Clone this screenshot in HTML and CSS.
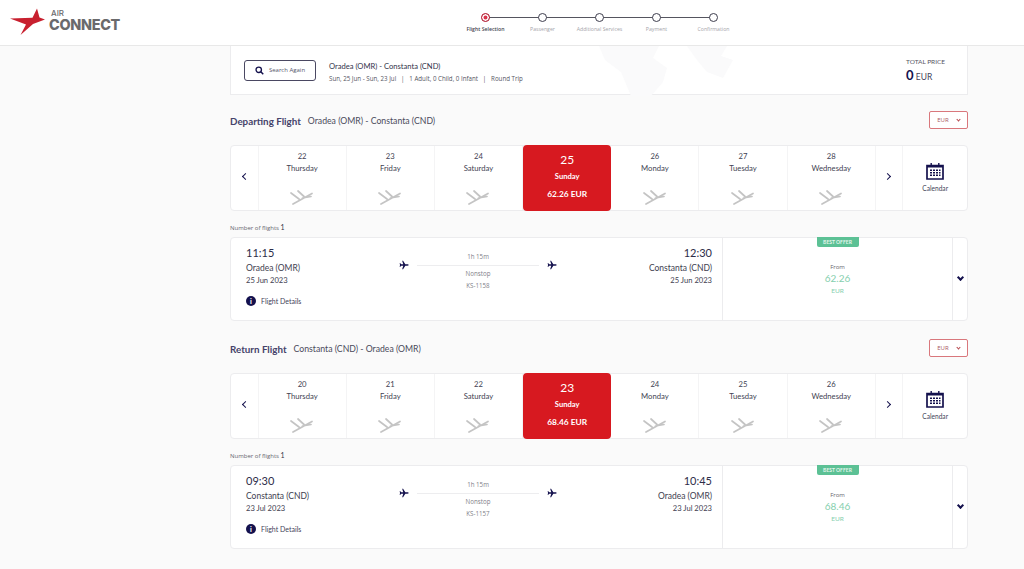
FILE: index.html
```html
<!DOCTYPE html>
<html lang="en">
<head>
    <meta charset="UTF-8">
    <meta name="viewport" content="width=device-width, initial-scale=1.0">
    <title>Air Connect - Flight Selection</title>
    <link rel="stylesheet" href="styles.css">
</head>
<body>
    <svg class="icon-defs" width="0" height="0">
        <symbol id="planeSide" viewBox="0 0 12 12">
            <path d="M11.6 6c0-.5-.6-.8-1.3-.8H7.6L4.9.9H3.8l1.3 4.3H2.7L1.6 3.8H.7l.6 2.2-.6 2.2h.9l1.1-1.4h2.4L3.8 11.1h1.1l2.7-4.3h2.7c.7 0 1.3-.3 1.3-.8z"/>
        </symbol>
        <symbol id="planeOff" viewBox="0 0 24 15">
            <path d="M3 14 L22 3.500 M1 3 L9 9 M8 1 L14 6.500 M12.500 8 L21 6.500" fill="none" stroke="currentColor" stroke-width="1.700" stroke-linecap="round"/>
        </symbol>
        <symbol id="calendarIcon" viewBox="0 0 18 18">
            <path d="M1 3.500h16v13.500H1z" fill="none" stroke="currentColor" stroke-width="1.700"/>
            <path d="M1 3h16v2.500H1zM4.500 1h1.400v3H4.500zM12.100 1h1.400v3h-1.400z" fill="currentColor"/>
            <path d="M4 7.500h2v1.500H4zM7 7.500h2v1.500H7zM10 7.500h2v1.500h-2zM13 7.500h1.500v1.500H13zM4 10h2v1.500H4zM7 10h2v1.500H7zM10 10h2v1.500h-2zM13 10h1.500v1.500H13zM4 12.500h2V14H4zM7 12.500h2V14H7zM10 12.500h2V14h-2zM13 12.500h1.500V14H13z" fill="currentColor"/>
        </symbol>
    </svg>

    <header class="topbar">
        <div class="logo">
            <svg class="logo-mark" viewBox="0 0 36 28" width="36" height="28">
                <path d="M0 10.500 L22.500 9.800 L27 0.500 L29.500 9.500 L35 11.500 L23 16 L10.500 27 L16 16.500 Z" fill="#c8202f"/>
            </svg>
            <div class="logo-text">
                <span class="logo-air">AIR</span>
                <span class="logo-connect">CONNECT</span>
            </div>
        </div>
        <ol class="steps">
            <li class="step active"><span class="dot"></span><span class="step-label">Flight Selection</span></li>
            <li class="step"><span class="dot"></span><span class="step-label">Passenger</span></li>
            <li class="step"><span class="dot"></span><span class="step-label">Additional Services</span></li>
            <li class="step"><span class="dot"></span><span class="step-label">Payment</span></li>
            <li class="step"><span class="dot"></span><span class="step-label">Confirmation</span></li>
        </ol>
    </header>

    <main class="content">
        <section class="summary">
            <svg class="summary-map" viewBox="0 0 200 50" width="200" height="50">
                <path d="M8 0h60l-6 12 14 10-4 14-12 14H40L30 26 14 14zM96 0h40l-6 10 12 4-10 18-16-6-10-12z" fill="#fafafb"/>
            </svg>
            <button class="search-again">
                <svg class="search-icon" viewBox="0 0 12 12" width="9" height="9">
                    <circle cx="5" cy="5" r="3.600" fill="none" stroke="currentColor" stroke-width="1.800"/>
                    <path d="M7.700 7.700 11 11" stroke="currentColor" stroke-width="2"/>
                </svg>
                Search Again
            </button>
            <div class="summary-info">
                <div class="summary-route">Oradea (OMR) - Constanta (CND)</div>
                <div class="summary-meta">Sun, 25 Jun - Sun, 23 Jul &nbsp; | &nbsp; 1 Adult, 0 Child, 0 Infant &nbsp; | &nbsp; Round Trip</div>
            </div>
            <div class="total">
                <div class="total-label">TOTAL PRICE</div>
                <div class="total-value"><b>0</b> EUR</div>
            </div>
        </section>

        <div class="section-head">
            <h2>Departing Flight</h2>
            <span class="section-route">Oradea (OMR) - Constanta (CND)</span>
            <button class="currency">EUR <span class="caret"></span></button>
        </div>
        <div class="dates">
            <button class="arrow"><span class="chev chev-left"></span></button>
            <div class="day"><span>22</span><span>Thursday</span><svg class="no-flight"><use href="#planeOff"/></svg></div>
            <div class="day"><span>23</span><span>Friday</span><svg class="no-flight"><use href="#planeOff"/></svg></div>
            <div class="day"><span>24</span><span>Saturday</span><svg class="no-flight"><use href="#planeOff"/></svg></div>
            <div class="day selected"><span class="day-num">25</span><span class="day-name">Sunday</span><span class="day-price">62.26 EUR</span></div>
            <div class="day"><span>26</span><span>Monday</span><svg class="no-flight"><use href="#planeOff"/></svg></div>
            <div class="day"><span>27</span><span>Tuesday</span><svg class="no-flight"><use href="#planeOff"/></svg></div>
            <div class="day"><span>28</span><span>Wednesday</span><svg class="no-flight"><use href="#planeOff"/></svg></div>
            <button class="arrow arrow-next"><span class="chev chev-right"></span></button>
            <div class="calendar"><svg class="calendar-icon"><use href="#calendarIcon"/></svg><span>Calendar</span></div>
        </div>
        <div class="flight-count">Number of flights <b>1</b></div>
        <article class="flight">
            <div class="flight-main">
                <div class="leg">
                    <div class="time">11:15</div>
                    <div class="city">Oradea (OMR)</div>
                    <div class="date">25 Jun 2023</div>
                    <div class="details"><span class="info">i</span>Flight Details</div>
                </div>
                <div class="route">
                    <div class="route-line">
                        <svg class="plane"><use href="#planeSide"/></svg>
                        <div class="track"><span class="duration">1h 15m</span></div>
                        <svg class="plane"><use href="#planeSide"/></svg>
                    </div>
                    <div class="route-note">Nonstop</div>
                    <div class="route-note">KS-1158</div>
                </div>
                <div class="leg leg-end">
                    <div class="time">12:30</div>
                    <div class="city">Constanta (CND)</div>
                    <div class="date">25 Jun 2023</div>
                </div>
            </div>
            <div class="price">
                <span class="badge">BEST OFFER</span>
                <span class="from">From</span>
                <span class="amount">62.26</span>
                <span class="price-cur">EUR</span>
            </div>
            <div class="expand"><span class="chev chev-down"></span></div>
        </article>

        <div class="section-head section-return">
            <h2>Return Flight</h2>
            <span class="section-route">Constanta (CND) - Oradea (OMR)</span>
            <button class="currency">EUR <span class="caret"></span></button>
        </div>
        <div class="dates">
            <button class="arrow"><span class="chev chev-left"></span></button>
            <div class="day"><span>20</span><span>Thursday</span><svg class="no-flight"><use href="#planeOff"/></svg></div>
            <div class="day"><span>21</span><span>Friday</span><svg class="no-flight"><use href="#planeOff"/></svg></div>
            <div class="day"><span>22</span><span>Saturday</span><svg class="no-flight"><use href="#planeOff"/></svg></div>
            <div class="day selected"><span class="day-num">23</span><span class="day-name">Sunday</span><span class="day-price">68.46 EUR</span></div>
            <div class="day"><span>24</span><span>Monday</span><svg class="no-flight"><use href="#planeOff"/></svg></div>
            <div class="day"><span>25</span><span>Tuesday</span><svg class="no-flight"><use href="#planeOff"/></svg></div>
            <div class="day"><span>26</span><span>Wednesday</span><svg class="no-flight"><use href="#planeOff"/></svg></div>
            <button class="arrow arrow-next"><span class="chev chev-right"></span></button>
            <div class="calendar"><svg class="calendar-icon"><use href="#calendarIcon"/></svg><span>Calendar</span></div>
        </div>
        <div class="flight-count">Number of flights <b>1</b></div>
        <article class="flight">
            <div class="flight-main">
                <div class="leg">
                    <div class="time">09:30</div>
                    <div class="city">Constanta (CND)</div>
                    <div class="date">23 Jul 2023</div>
                    <div class="details"><span class="info">i</span>Flight Details</div>
                </div>
                <div class="route">
                    <div class="route-line">
                        <svg class="plane"><use href="#planeSide"/></svg>
                        <div class="track"><span class="duration">1h 15m</span></div>
                        <svg class="plane"><use href="#planeSide"/></svg>
                    </div>
                    <div class="route-note">Nonstop</div>
                    <div class="route-note">KS-1157</div>
                </div>
                <div class="leg leg-end">
                    <div class="time">10:45</div>
                    <div class="city">Oradea (OMR)</div>
                    <div class="date">23 Jul 2023</div>
                </div>
            </div>
            <div class="price">
                <span class="badge">BEST OFFER</span>
                <span class="from">From</span>
                <span class="amount">68.46</span>
                <span class="price-cur">EUR</span>
            </div>
            <div class="expand"><span class="chev chev-down"></span></div>
        </article>
    </main>
</body>
</html>
```

FILE: styles.css
```css
:root {
    --navy: #14114d;
    --ink: #33324f;
    --text: #4a4a5a;
    --muted: #8a8a94;
    --red: #d71920;
    --green: #5cc195;
    --line: #ececee;
}

* {
    box-sizing: border-box;
}

body {
    margin: 0;
    font-family: "Lato", "Liberation Sans", sans-serif;
    background-color: #fafafa;
    color: var(--text);
    height: 569px;
    overflow: hidden;
}

.icon-defs {
    position: absolute;
}

button {
    font-family: inherit;
    background: none;
    border: none;
    padding: 0;
}

/* header */
.topbar {
    height: 46px;
    background-color: #fff;
    border-bottom: 1px solid #e8e8e8;
    display: flex;
    align-items: flex-start;
    padding: 8px 0 0 10px;
}

.logo {
    display: flex;
    align-items: flex-start;
    width: 447px;
}

.logo-mark {
    flex: none;
}

.logo-text {
    display: flex;
    flex-direction: column;
    margin: 0 0 0 3px;
    color: #6a6a6c;
    font-family: "Inter", "Liberation Sans", sans-serif;
}

.logo-air {
    font-size: 8px;
    line-height: 9px;
    margin: 1px 0 0 2px;
    font-weight: 500;
}

.logo-connect {
    font-size: 14.400px;
    line-height: 14px;
    font-weight: 800;
    letter-spacing: -0.3px;
}

.steps {
    list-style: none;
    display: flex;
    margin: 0;
    padding: 5px 0 0;
}

.step {
    width: 57px;
    display: flex;
    flex-direction: column;
    align-items: center;
    position: relative;
}

.step:not(:last-child)::after {
    content: '';
    position: absolute;
    top: 4px;
    left: 28px;
    width: 57px;
    height: 1px;
    background-color: #55555f;
}

.dot {
    width: 9px;
    height: 9px;
    border-radius: 50%;
    border: 1px solid #3e3e4e;
    background-color: #fff;
    position: relative;
    z-index: 1;
}

.active .dot {
    border-color: #b0283c;
    background-color: #d9334a;
    box-shadow: inset 0 0 0 1.500px #fff;
}

.step-label {
    font-family: "Open Sans", sans-serif;
    font-size: 5.200px;
    line-height: 8px;
    margin-top: 3px;
    color: #a4a4aa;
    white-space: nowrap;
}

.active .step-label {
    color: #44444f;
    font-weight: 600;
}

/* page content */
.content {
    width: 738px;
    margin-left: 230px;
}

.summary {
    height: 49px;
    background-color: #fff;
    border: 1px solid var(--line);
    border-top: none;
    display: flex;
    align-items: center;
    padding: 0 14px 0 13px;
    position: relative;
}

.summary-map {
    position: absolute;
    left: 360px;
    top: 0;
}

.search-again {
    width: 72px;
    height: 21px;
    border: 1px solid #4a4862;
    border-radius: 3px;
    font-family: "Open Sans", sans-serif;
    font-size: 6px;
    color: #55556a;
    display: flex;
    align-items: center;
    justify-content: center;
    gap: 5px;
    position: relative;
}

.search-icon {
    color: var(--navy);
}

.summary-info {
    margin-left: 13px;
    padding-top: 2px;
    flex: 1;
    position: relative;
}

.summary-route {
    font-size: 7.600px;
    line-height: 12px;
    color: #33334a;
}

.summary-meta {
    font-family: "Open Sans", sans-serif;
    font-size: 6.200px;
    line-height: 9px;
    margin-top: 2px;
    color: #55555f;
}

.total {
    width: 47px;
    position: relative;
}

.total-label {
    font-size: 6.500px;
    line-height: 10px;
    margin-top: 1px;
    color: #55555f;
    white-space: nowrap;
}

.total-value {
    font-size: 8.500px;
    line-height: 14px;
    margin-top: 1px;
    color: #44445a;
}

.total-value b {
    font-size: 13px;
    color: var(--navy);
}

.section-head {
    display: flex;
    align-items: center;
    height: 18px;
    margin-top: 16px;
}

.section-return {
    margin-top: 18px;
}

.section-head h2 {
    font-size: 9.800px;
    font-weight: 700;
    line-height: 12px;
    color: #45436a;
    margin: 2px 7px 0 0;
}

.section-route {
    font-size: 8.700px;
    margin-top: 1px;
    color: #4a4a5a;
}

.currency {
    margin-left: auto;
    width: 39px;
    height: 18px;
    border: 1px solid #d9777c;
    border-radius: 2px;
    background-color: #fff;
    font-family: "Open Sans", sans-serif;
    font-size: 6px;
    color: #a9575c;
    display: flex;
    align-items: center;
    justify-content: center;
    gap: 8px;
}

.caret {
    width: 3px;
    height: 3px;
    border-right: 1px solid #b6474d;
    border-bottom: 1px solid #b6474d;
    transform: rotate(45deg);
    margin-top: -2px;
}

/* date strip */
.dates {
    display: flex;
    height: 66px;
    margin-top: 16px;
    background-color: #fff;
    border: 1px solid var(--line);
    border-radius: 4px;
}

.arrow {
    width: 27.500px;
    flex: none;
    display: flex;
    align-items: center;
    justify-content: center;
    padding-bottom: 3px;
    border-right: 1px solid #f4f4f5;
}

.chev {
    width: 5px;
    height: 5px;
    border-right: 1.500px solid var(--navy);
    border-bottom: 1.500px solid var(--navy);
    display: block;
}

.chev-left {
    transform: rotate(135deg);
    margin-left: 2px;
}

.chev-right {
    transform: rotate(-45deg);
    margin-right: 3px;
}

.chev-down {
    width: 5px;
    height: 5px;
    border-width: 2px;
    transform: rotate(45deg);
    margin-top: -4px;
}

.day {
    width: 88.200px;
    flex: none;
    display: flex;
    flex-direction: column;
    align-items: center;
    padding-top: 4px;
    font-size: 7.700px;
    line-height: 12px;
    color: #3f3f52;
    border-right: 1px solid #f4f4f5;
}

.no-flight {
    width: 24px;
    height: 15px;
    margin-top: 16px;
    color: #c4c4c4;
}

.selected {
    background-color: var(--red);
    border: none;
    border-radius: 4px;
    color: #fff;
    margin: -1px 0;
    padding-top: 7px;
    height: 66px;
}

.day-num {
    font-size: 12px;
    line-height: 15px;
}

.day-name {
    font-size: 7.600px;
    font-weight: 700;
    margin-top: 3px;
}

.day-price {
    font-size: 8.400px;
    margin-top: 6px;
    font-weight: 700;
}

.calendar {
    flex: 1;
    display: flex;
    flex-direction: column;
    align-items: center;
    padding-top: 16px;
    font-size: 6.600px;
    line-height: 12px;
    color: #44445a;
}

.calendar-icon {
    width: 18px;
    height: 18px;
    color: var(--navy);
    margin-bottom: 2px;
}

.flight-count {
    font-family: "Open Sans", sans-serif;
    font-size: 6px;
    height: 10px;
    line-height: 10px;
    margin-top: 12px;
    color: #66666f;
}

.flight-count b {
    font-family: "Lato", sans-serif;
    font-weight: 400;
    font-size: 7px;
    line-height: 1;
    color: #33334a;
}

/* flight card */
.flight {
    display: flex;
    height: 84px;
    margin-top: 4px;
    background-color: #fff;
    border: 1px solid var(--line);
    border-radius: 4px;
}

.flight-main {
    width: 492px;
    flex: none;
    display: flex;
    justify-content: space-between;
    padding: 8px 10px 0 15px;
    border-right: 1px solid var(--line);
}

.leg {
    width: 130px;
}

.leg-end {
    text-align: right;
}

.time {
    font-size: 11px;
    line-height: 13px;
    color: #2d2d48;
}

.city {
    font-size: 8.500px;
    line-height: 12px;
    margin-top: 3px;
    color: #3e3e50;
}

.date {
    font-size: 7.600px;
    line-height: 12px;
    color: #3e3e50;
}

.details {
    display: flex;
    align-items: center;
    gap: 5px;
    font-size: 7px;
    line-height: 10px;
    margin-top: 10px;
    color: #44445a;
}

.info {
    width: 10px;
    height: 10px;
    border-radius: 50%;
    background-color: var(--navy);
    color: #fff;
    font-size: 7px;
    font-weight: 900;
    text-align: center;
}

.route {
    width: 158px;
    margin: 14px 2px 0 0;
    text-align: center;
}

.route-line {
    display: flex;
    align-items: center;
    height: 10px;
}

.plane {
    width: 10px;
    height: 10px;
    flex: none;
    fill: var(--navy);
}

.track {
    flex: 1;
    height: 1px;
    margin: 0 8px;
    background-color: #ededef;
    position: relative;
}

.duration {
    position: absolute;
    left: 0;
    right: 0;
    top: -13px;
    font-family: "Open Sans", sans-serif;
    font-size: 6.200px;
    line-height: 9px;
    color: #808088;
}

.route-note {
    font-family: "Open Sans", sans-serif;
    font-size: 6.200px;
    line-height: 8px;
    color: #808088;
}

.route-note + .route-note {
    margin-top: 4px;
}

.price {
    width: 230px;
    flex: none;
    display: flex;
    flex-direction: column;
    align-items: center;
    border-right: 1px solid var(--line);
}

.badge {
    width: 42px;
    height: 10px;
    margin-top: -1px;
    background-color: var(--green);
    border-radius: 0 0 2px 2px;
    color: #e4f5ec;
    font-size: 5px;
    font-weight: 700;
    line-height: 10px;
    text-align: center;
}

.from {
    font-family: "Open Sans", sans-serif;
    font-size: 6px;
    line-height: 9px;
    margin-top: 16px;
    color: #66666f;
}

.amount {
    font-size: 10px;
    line-height: 13px;
    color: #85cfae;
}

.price-cur {
    font-size: 6.500px;
    line-height: 10px;
    margin-top: 1px;
    color: #85cfae;
}

.expand {
    flex: 1;
    display: flex;
    align-items: center;
    justify-content: center;
}
```
